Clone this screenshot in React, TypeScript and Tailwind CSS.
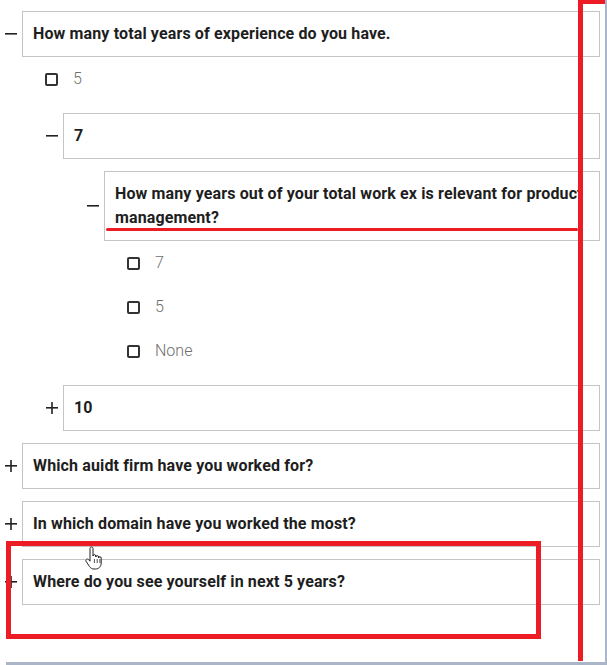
import type { ReactNode } from 'react';

const font = { fontFamily: 'Roboto, "Liberation Sans", sans-serif' };

function Sign({ open }: { open: boolean }) {
  return (
    <div className="flex w-[22px] shrink-0 items-center justify-center">
      <svg width="12" height="12" viewBox="0 0 12 12">
        <rect x="0" y="5" width="12" height="1.6" fill="#222" />
        {!open && <rect x="5.2" y="0" width="1.6" height="12" fill="#222" />}
      </svg>
    </div>
  );
}

function Node({
  title,
  open,
  first,
  children,
}: {
  title: string;
  open: boolean;
  first?: boolean;
  children?: ReactNode;
}) {
  return (
    <div className={first ? 'mt-[11px]' : 'mt-3'}>
      <div className="flex">
        <Sign open={open} />
        <div className="flex-1 border border-[#c4c4c4] px-[10px] py-[10px] text-[16px] leading-[24px] font-bold tracking-[0.13px] text-[#1e1e1e]">
          {title}
        </div>
      </div>
      {open && <div className="pl-[41px]">{children}</div>}
    </div>
  );
}

function Option({ label }: { label: string }) {
  return (
    <div className="flex h-[44px] items-center">
      <div className="ml-[4px] h-[13px] w-[13px] rounded-[2px] border-2 border-[#333]" />
      <span className="ml-[15px] text-[16px] font-light text-[#6f6f6f]">{label}</span>
    </div>
  );
}

export default function App() {
  return (
    <div className="relative h-[665px] w-[607px] overflow-hidden bg-white" style={font}>
      <div className="w-[600px]">
        <Node title="How many total years of experience do you have." open first>
          <Option label="5" />
          <Node title="7" open>
            <Node title="How many years out of your total work ex is relevant for product management?" open>
              <Option label="7" />
              <Option label="5" />
              <Option label="None" />
            </Node>
          </Node>
          <Node title="10" open={false} />
        </Node>
        <Node title="Which auidt firm have you worked for?" open={false} />
        <Node title="In which domain have you worked the most?" open={false} />
        <Node title="Where do you see yourself in next 5 years?" open={false} />
      </div>

      {/* window edges */}
      <div className="absolute top-0 right-0 h-full w-[2px] bg-[#aab6c8]" />
      <div className="absolute bottom-0 left-[6px] h-[3px] w-[601px] bg-[#aab6c8]" />

      {/* annotations */}
      <div className="absolute top-0 left-[578px] h-[661px] w-[5px] bg-[#ed1c24]" />
      <div className="absolute top-0 left-[578px] h-[4px] w-[27px] bg-[#ed1c24]" />
      <div className="absolute top-[228px] left-[106px] h-[3px] w-[472px] rounded-full bg-[#ed1c24]" />
      <div className="absolute top-[541px] left-[6px] h-[98px] w-[535px] border-[5px] border-[#ed1c24]" />

      {/* pointer cursor */}
      <svg className="absolute top-[546px] left-[84px]" width="20" height="24" viewBox="0 0 20 24">
        <path
          d="M6 2.5c0-1 .7-1.6 1.5-1.6S9 1.5 9 2.5V10c0-.8.6-1.4 1.4-1.4s1.4.6 1.4 1.4v1c0-.8.6-1.4 1.4-1.4s1.4.6 1.4 1.4v1c0-.8.6-1.3 1.3-1.3s1.3.5 1.3 1.3v5c0 3.3-2.4 6-5.6 6H10c-2 0-3.4-.9-4.5-2.5L2.2 15.6c-.6-.8-.5-1.8.3-2.3.7-.5 1.6-.3 2.2.4L6 15.2z"
          fill="#fff"
          stroke="#222"
          strokeWidth="1"
          strokeLinejoin="round"
        />
        <path d="M10.4 13v4M13.2 13v4M15.9 13v4" stroke="#222" strokeWidth="0.8" />
      </svg>
    </div>
  );
}
